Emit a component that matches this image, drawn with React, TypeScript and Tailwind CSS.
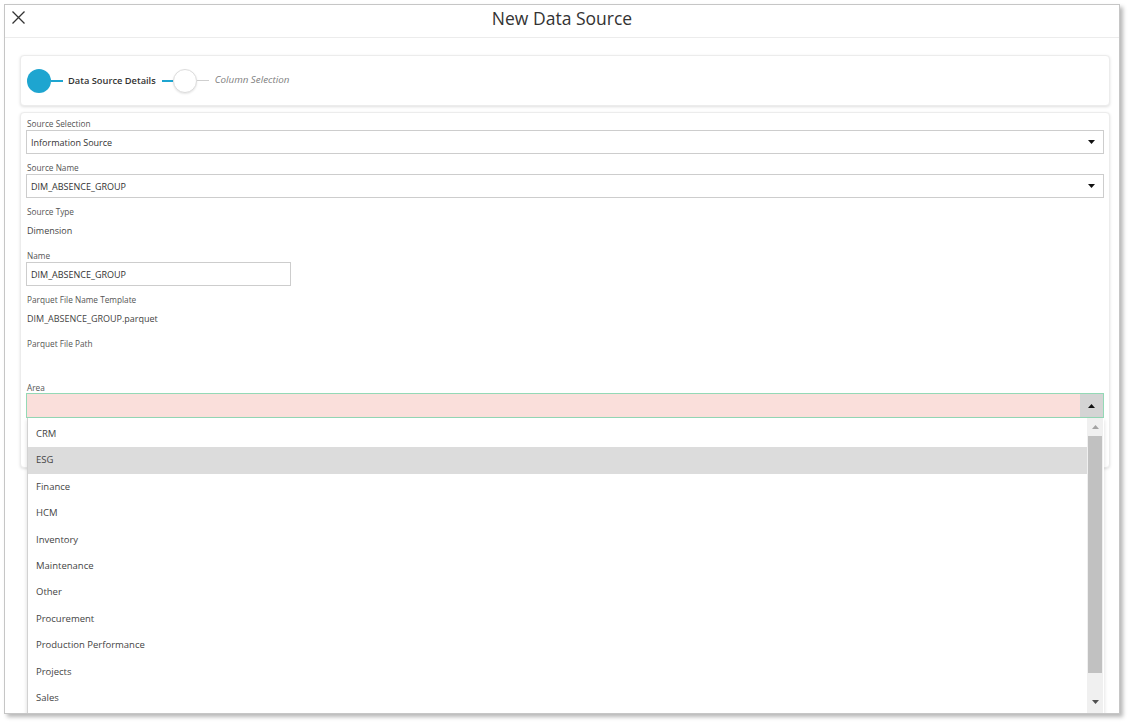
import React from "react";

const font = { fontFamily: '"Open Sans", "Noto Sans", sans-serif' };

function CaretDown() {
  return (
    <svg width="7" height="4" viewBox="0 0 7 4" className="block">
      <polygon points="0,0 7,0 3.5,4" fill="#111" />
    </svg>
  );
}

function CaretUp({ color = "#111" }: { color?: string }) {
  return (
    <svg width="7" height="4" viewBox="0 0 7 4" className="block">
      <polygon points="0,4 7,4 3.5,0" fill={color} />
    </svg>
  );
}

function Label({ children, mt }: { children: React.ReactNode; mt: string }) {
  return (
    <div className={`${mt} pl-[1px] h-[12px] leading-[14px] text-[8.25px] text-[#555]`}>{children}</div>
  );
}

function Value({ children, mt }: { children: React.ReactNode; mt: string }) {
  return (
    <div className={`${mt} pl-[1px] h-[12px] leading-[14px] text-[9px] text-[#444]`}>{children}</div>
  );
}

function Select({ value }: { value: string }) {
  return (
    <div className="mt-px h-[24px] border border-[#cdcdcd] flex items-center justify-between pl-[4px] pr-[8px] bg-white">
      <span className="text-[9px] leading-[14px] pt-[2px] text-[#333]">{value}</span>
      <CaretDown />
    </div>
  );
}

const items = [
  "CRM",
  "ESG",
  "Finance",
  "HCM",
  "Inventory",
  "Maintenance",
  "Other",
  "Procurement",
  "Production Performance",
  "Projects",
  "Sales",
];

export default function App() {
  return (
    <div className="w-[1128px] h-[722px] bg-white pt-[4px] pl-[4px]" style={font}>
      <div className="w-[1116px] h-[710px] border border-[#c6c6c6] shadow-[3px_3px_4px_rgba(0,0,0,0.28)] bg-white flex flex-col overflow-hidden">
        {/* Header */}
        <div className="h-[33px] shrink-0 border-b border-[#ececec] flex items-start">
          <div className="w-[40px] pl-[7px] pt-[6px]">
            <svg width="13" height="13" viewBox="0 0 13 13" className="block">
              <path d="M0.5 0.5 L12.5 12.5 M12.5 0.5 L0.5 12.5" stroke="#333" strokeWidth="1.3" />
            </svg>
          </div>
          <div className="flex-1 text-center pt-px leading-[24px] text-[17.5px] text-[#333]">New Data Source</div>
          <div className="w-[40px]" />
        </div>

        {/* Body */}
        <div className="flex-1 pt-[17px] pl-[15px] pr-[9px] flex flex-col">
          {/* Stepper card */}
          <div className="h-[51px] shrink-0 rounded-[4px] border border-[#ececec] shadow-[0_1px_3px_rgba(0,0,0,0.13)] bg-white flex items-center pl-[6px]">
            <div className="w-[24px] h-[24px] rounded-full bg-[#1ea5d0]" />
            <div className="w-[12px] h-[2px] bg-[#1ea5d0]" />
            <div className="ml-[5px] text-[9.3px] font-semibold text-[#333]">Data Source Details</div>
            <div className="ml-[6px] w-[11px] h-[2px] bg-[#1ea5d0]" />
            <div className="w-[24px] h-[24px] rounded-full bg-white border border-[#dcdcdc] shadow-[0_1px_2px_rgba(0,0,0,0.1)]" />
            <div className="w-[12px] h-[1.5px] bg-[#cfcfcf]" />
            <div className="ml-[6px] text-[9.8px] italic text-[#808080]">Column Selection</div>
          </div>

          {/* Form card */}
          <div className="mt-[6px] shrink-0 rounded-[4px] border border-[#ececec] shadow-[0_1px_3px_rgba(0,0,0,0.13)] bg-white px-[5px] pt-[4px] pb-[49px] flex flex-col">
            <Label mt="mt-0">Source Selection</Label>
            <Select value="Information Source" />
            <Label mt="mt-[7px]">Source Name</Label>
            <Select value="DIM_ABSENCE_GROUP" />
            <Label mt="mt-[7px]">Source Type</Label>
            <Value mt="mt-[7px]">Dimension</Value>
            <Label mt="mt-[13px]">Name</Label>
            <div className="mt-px w-[265px] h-[24px] border border-[#cdcdcd] flex items-center pl-[4px]">
              <span className="text-[9px] leading-[14px] pt-[2px] text-[#333]">DIM_ABSENCE_GROUP</span>
            </div>
            <Label mt="mt-[7px]">Parquet File Name Template</Label>
            <Value mt="mt-[7px]">DIM_ABSENCE_GROUP.parquet</Value>
            <Label mt="mt-[13px]">Parquet File Path</Label>
            <Label mt="mt-[32px]">Area</Label>

            <div className="relative">
              <div className="h-[25px] border border-[#94d9b6] bg-[#fadfdb] flex justify-end">
                <div className="w-[23px] h-full bg-[#d4d4d4] flex items-center justify-center">
                  <CaretUp />
                </div>
              </div>

              {/* Dropdown list */}
              <div className="absolute left-px right-0 top-full h-[300px] bg-white border-l border-[#d2d2d2] shadow-[0_2px_4px_rgba(0,0,0,0.15)] flex z-10">
                <div className="flex-1 pt-[3px]">
                  {items.map((it) => (
                    <div
                      key={it}
                      className={`h-[26.4px] flex items-center pl-[8px] text-[9.5px] text-[#444] ${
                        it === "ESG" ? "bg-[#dcdcdc]" : ""
                      }`}
                    >
                      {it}
                    </div>
                  ))}
                </div>
                <div className="w-[16px] mr-px bg-[#f0f0f0] flex flex-col">
                  <div className="h-[18px] flex items-center justify-center">
                    <svg width="7" height="4" viewBox="0 0 7 4" className="block">
                      <polygon points="0,4 7,4 3.5,0" fill="#a3a3a3" />
                    </svg>
                  </div>
                  <div className="h-[237px] mx-px bg-[#c1c1c1]" />
                  <div className="flex-1" />
                  <div className="h-[24px] flex items-start justify-center pt-[6px]">
                    <svg width="7" height="4" viewBox="0 0 7 4" className="block">
                      <polygon points="0,0 7,0 3.5,4" fill="#505050" />
                    </svg>
                  </div>
                </div>
              </div>
            </div>
          </div>
        </div>
      </div>
    </div>
  );
}
